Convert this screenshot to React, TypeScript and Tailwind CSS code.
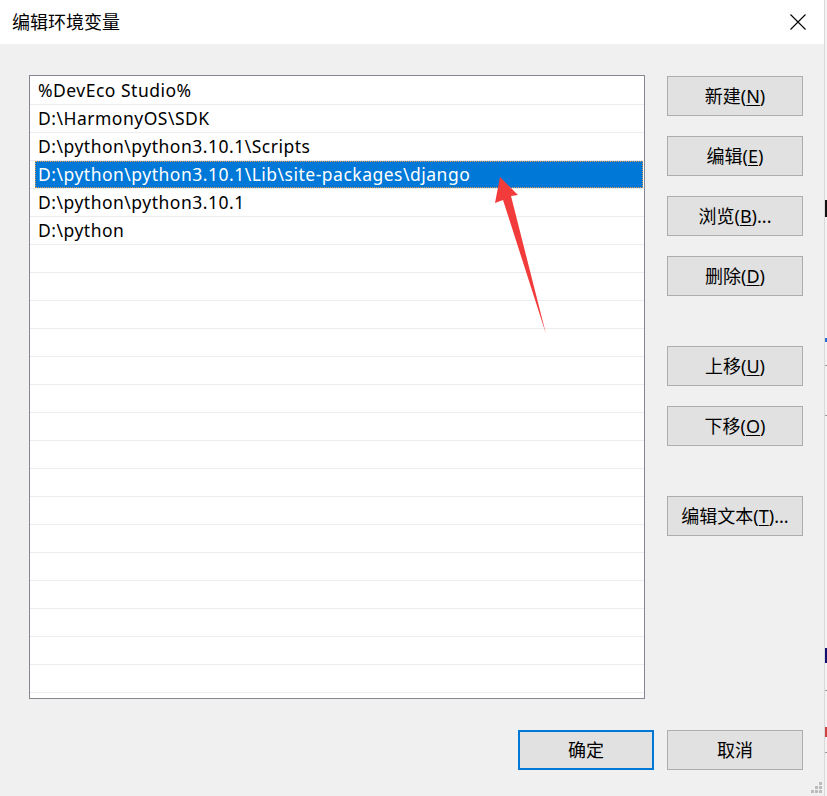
import React from 'react';

const paths = [
  '%DevEco Studio%',
  'D:\\HarmonyOS\\SDK',
  'D:\\python\\python3.10.1\\Scripts',
  'D:\\python\\python3.10.1\\Lib\\site-packages\\django',
  'D:\\python\\python3.10.1',
  'D:\\python',
];

const ROWS = 22;
const SELECTED = 3;

const font = { fontFamily: '"Noto Sans", "Noto Sans CJK SC", sans-serif' };

function WinButton({ label, hotkey, tail = '', primary = false }: { label: string; hotkey?: string; tail?: string; primary?: boolean }) {
  return (
    <button
      className={
        'w-[136px] h-10 bg-[#e1e1e1] text-[18px] text-black flex items-center justify-center leading-none ' +
        (primary ? 'border-2 border-[#0078d7]' : 'border border-[#adadad]')
      }
    >
      {label}
      {hotkey && (
        <>
          (<span className="underline underline-offset-2">{hotkey}</span>){tail}
        </>
      )}
    </button>
  );
}

export default function App() {
  return (
    <div className="w-[827px] h-[796px] flex bg-[#f0f0f0] overflow-hidden" style={font}>
      {/* dialog */}
      <div className="w-[825px] h-[796px] flex flex-col border-r border-[#d9d9d9] bg-[#f0f0f0]">
        {/* title bar */}
        <div className="h-11 bg-white flex items-center justify-between pl-3 pr-[18px] shrink-0">
          <span className="text-[18px] text-black">编辑环境变量</span>
          <svg width="16" height="16" viewBox="0 0 16 16" className="text-black">
            <path d="M0.5 0.5L15.5 15.5M15.5 0.5L0.5 15.5" stroke="currentColor" strokeWidth="1.1" fill="none" />
          </svg>
        </div>

        {/* body */}
        <div className="flex-1 flex flex-col pl-[29px] pr-[21px] pt-[31px]">
          <div className="flex gap-[22px]">
            {/* list */}
            <div className="relative w-[617px] h-[624px] bg-white border border-[#828790] overflow-hidden pt-px">
              {Array.from({ length: ROWS }).map((_, i) => {
                const text = paths[i];
                const sel = i === SELECTED;
                return (
                  <div key={i} className="h-7 border-b border-[#ececec] flex text-[17.5px] tracking-[0.5px]">
                    {sel ? (
                      <div className="ml-[5px] mr-px flex-1 h-[27px] bg-[#0078d7] outline-1 outline-dotted outline-[#d99a4e] -outline-offset-1 flex items-center pl-[3px] text-white">
                        {text}
                      </div>
                    ) : (
                      <div className="flex-1 h-[27px] flex items-center pl-[8px] text-black">{text ?? ''}</div>
                    )}
                  </div>
                );
              })}

              {/* red annotation arrow */}
              <svg className="absolute left-0 top-0 pointer-events-none" width="617" height="624" viewBox="29 75 617 624">
                <polygon points="499,176 517,194 510,195 545,333 502,199 494,202" fill="#f23c3c" />
              </svg>
            </div>

            {/* side buttons */}
            <div className="flex flex-col pt-px">
              <div className="flex flex-col gap-5">
                <WinButton label="新建" hotkey="N" />
                <WinButton label="编辑" hotkey="E" />
                <WinButton label="浏览" hotkey="B" tail="..." />
                <WinButton label="删除" hotkey="D" />
              </div>
              <div className="flex flex-col gap-5 mt-[50px]">
                <WinButton label="上移" hotkey="U" />
                <WinButton label="下移" hotkey="O" />
              </div>
              <div className="mt-[50px]">
                <WinButton label="编辑文本" hotkey="T" tail="..." />
              </div>
            </div>
          </div>

          {/* footer */}
          <div className="flex justify-end gap-[13px] mt-[31px]">
            <WinButton label="确定" primary />
            <WinButton label="取消" />
          </div>

          {/* size grip */}
          <div className="flex-1 flex items-end justify-end -mr-[19px] pb-[3px]">
            <svg width="11" height="11" viewBox="0 0 11 11">
              <rect x="8" y="0" width="3" height="3" fill="#bcbcbc" />
              <rect x="4" y="4" width="3" height="3" fill="#bcbcbc" />
              <rect x="8" y="4" width="3" height="3" fill="#bcbcbc" />
              <rect x="0" y="8" width="3" height="3" fill="#bcbcbc" />
              <rect x="4" y="8" width="3" height="3" fill="#bcbcbc" />
              <rect x="8" y="8" width="3" height="3" fill="#bcbcbc" />
            </svg>
          </div>
        </div>
      </div>

      {/* sliver of the window behind */}
      <div className="relative w-[2px] h-full bg-[#f3f3f3]">
        <div className="absolute top-[200px] h-[17px] w-[2px] bg-[#111]" />
        <div className="absolute top-[338px] h-[4px] w-[2px] bg-[#2a6fd0]" />
        <div className="absolute top-[365px] h-px w-[2px] bg-[#999]" />
        <div className="absolute top-[415px] h-px w-[2px] bg-[#999]" />
        <div className="absolute top-[648px] h-[15px] w-[2px] bg-[#101070]" />
        <div className="absolute top-[690px] h-px w-[2px] bg-[#999]" />
        <div className="absolute top-[727px] h-[10px] w-[2px] bg-[#c44]" />
        <div className="absolute top-[752px] h-px w-[2px] bg-[#999]" />
      </div>
    </div>
  );
}
